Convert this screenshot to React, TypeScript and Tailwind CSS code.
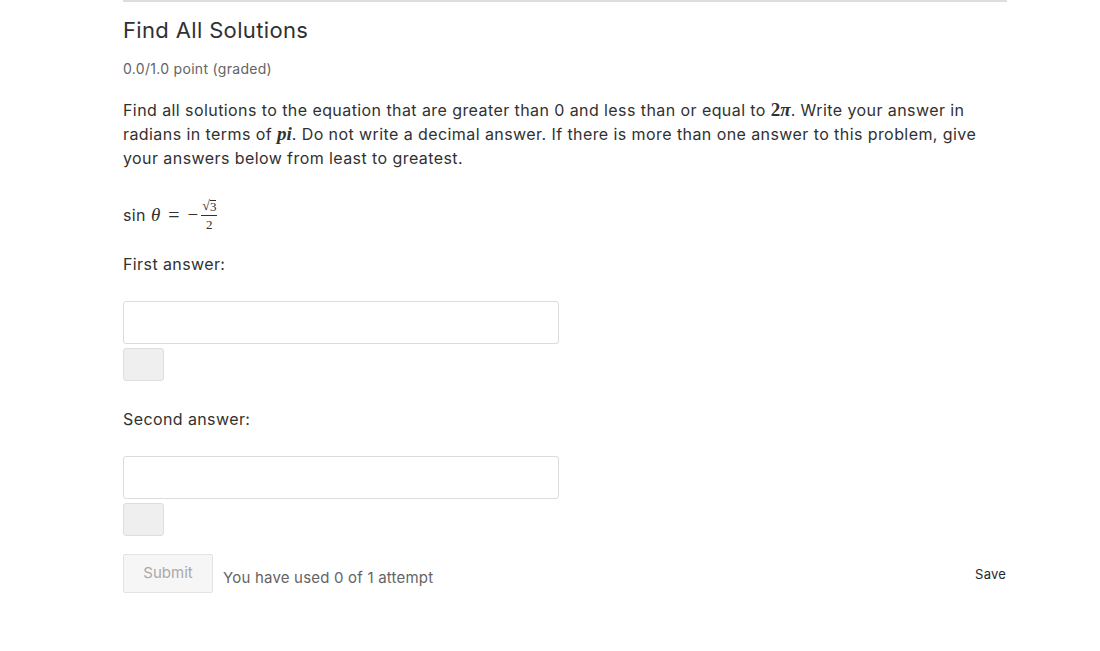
import React from 'react'

const math = { fontFamily: '"Liberation Serif", "DejaVu Serif", serif' }

function AnswerField({ label, className }: { label: string; className: string }) {
    return (
        <div className={className}>
            <p className="text-[16px] leading-[24px] tracking-[0.4px]">{label}</p>
            <input
                type="text"
                className="mt-[25px] block h-[43px] w-[436px] rounded-[3px] border border-[#dcdcdc] bg-white px-3 outline-none"
            />
            <div className="mt-[4px] h-[33px] w-[41px] rounded-[3px] border border-[#dedede] bg-[#efefef]" />
        </div>
    )
}

export default function App() {
    return (
        <div className="min-h-[651px] bg-white text-[#313131]" style={{ fontFamily: 'Inter, "Noto Sans", sans-serif' }}>
            <div className="w-[884px] border-t-2 border-[#dddddd] ml-[123px]">
                {/* problem header */}
                <h2 className="mt-[14px] text-[22px] leading-[28px] font-normal tracking-[0.35px]">Find All Solutions</h2>
                <div className="mt-[15px] text-[14px] leading-[20px] tracking-[0.3px] text-[#646464]">0.0/1.0 point (graded)</div>

                {/* problem text */}
                <p className="mt-[19px] text-[16px] leading-[24px] tracking-[0.42px]">
                    Find all solutions to the equation that are greater than 0 and less than or equal to{' '}
                    <span style={math} className="text-[19px] font-semibold tracking-normal">2<i>π</i></span>. Write your answer in radians in terms of{' '}
                    <span style={math} className="text-[19px] font-semibold italic tracking-normal">pi</span>. Do not write a decimal answer. If there is more than one answer to this problem, give your answers below from least to greatest.
                </p>

                <div className="mt-[26px] flex items-center h-[38px] text-[16px]">
                    <span className="tracking-[0.4px]">sin&nbsp;</span>
                    <span style={math} className="italic text-[19px]">θ</span>
                    <span style={math} className="mx-[8px] text-[20px]">=</span>
                    <span style={math} className="mr-[3px] text-[19px]">−</span>
                    <span style={math} className="inline-flex flex-col items-center text-[13px] leading-[13px]">
                        <span className="flex items-start px-[1px]">
                            <span className="text-[14px]">√</span>
                            <span className="mt-[1px] border-t border-[#313131] leading-[12px]">3</span>
                        </span>
                        <span className="my-[2px] w-full border-t border-[#313131]" />
                        <span>2</span>
                    </span>
                </div>

                <AnswerField label="First answer:" className="mt-[18px]" />
                <AnswerField label="Second answer:" className="mt-[26px]" />

                {/* actions */}
                <div className="mt-[18px] flex items-start">
                    <button className="h-[39px] w-[90px] rounded-[2px] border border-[#e3e3e3] bg-[#f6f6f6] text-[15px] text-[#a9a9a9]">
                        Submit
                    </button>
                    <span className="ml-[10px] mt-[14px] text-[15px] leading-[20px] tracking-[0.2px] text-[#646464]">You have used 0 of 1 attempt</span>
                    <button className="ml-auto mt-[10px] mr-[1px] text-[13px] leading-[20px] tracking-[0.2px] text-[#1d2833]">Save</button>
                </div>
            </div>
        </div>
    )
}
